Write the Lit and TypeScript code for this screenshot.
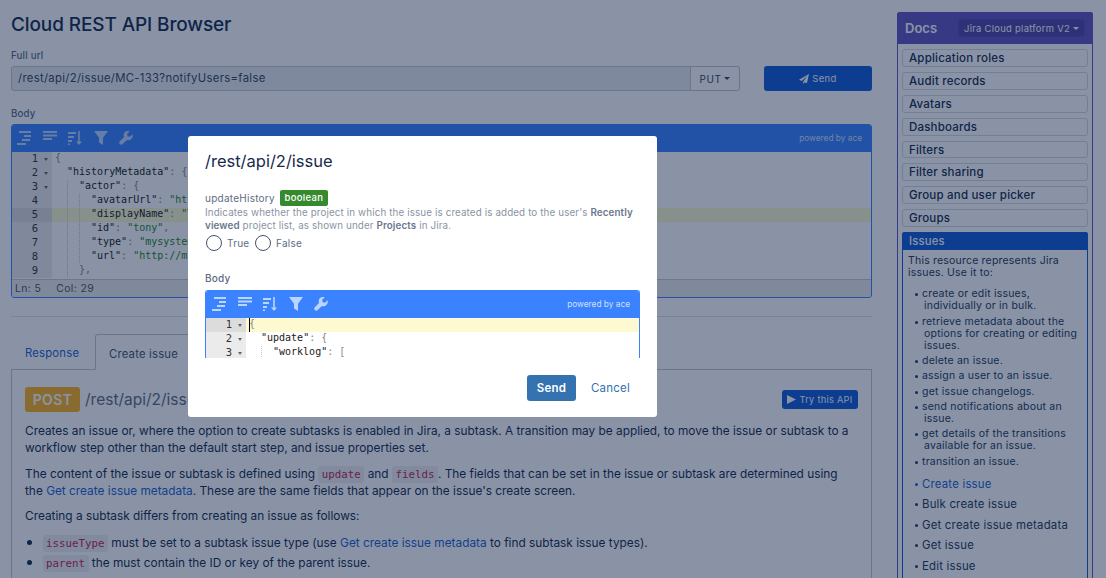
import { LitElement, html, css, svg } from "lit";
import { customElement } from "lit/decorators.js";

const icons = [
  svg`<path d="M2 0h12v2H2zM7 4h7v2H7zM5 8h8v2H5zM0 12h9v2H0z"/>`,
  svg`<path d="M0 0h14v2H0zM0 3.5h14v2H0zM0 7h9v2H0z"/>`,
  svg`<path d="M0 1h8v2H0zM0 5h6v2H0zM0 9h4v2H0zM0 12.5h2v1.5H0zM10.2 0h1.6v10.5H14L11 14 8 10.5h2.2z"/>`,
  svg`<path d="M0 0h14L9 6.8V14L5 11.5V6.8z"/>`,
  svg`<path d="M13.5 3.2L11 5.7 8.6 5.2 8.1 2.8 10.6.4C8.8-.3 6.8.2 5.6 1.6 4.6 2.9 4.4 4.6 5 6L.8 10.2C0 11 0 12.3.8 13.1 1.6 13.9 2.9 13.9 3.7 13.1L7.9 8.9C9.4 9.5 11.1 9.2 12.3 8 13.6 6.8 14.1 4.9 13.5 3.2Z"/>`,
];

type Seg = [string, string];
const k = (s: string): Seg => ["k", s];
const v = (s: string): Seg => ["v", s];
const p = (s: string): Seg => ["p", s];

const bgLines: { n: number; fold: boolean; ind: number; segs: Seg[]; active?: boolean }[] = [
  { n: 1, fold: true, ind: 0, segs: [p("{")] },
  { n: 2, fold: true, ind: 1, segs: [k('"historyMetadata"'), p(": {")] },
  { n: 3, fold: true, ind: 2, segs: [k('"actor"'), p(": {")] },
  { n: 4, fold: false, ind: 3, segs: [k('"avatarUrl"'), p(": "), v('"http://mysystem/avatar/tony.jpg"'), p(",")] },
  { n: 5, fold: false, ind: 3, segs: [k('"displayName"'), p(": "), v('"Tony"'), p(",")], active: true },
  { n: 6, fold: false, ind: 3, segs: [k('"id"'), p(": "), v('"tony"'), p(",")] },
  { n: 7, fold: false, ind: 3, segs: [k('"type"'), p(": "), v('"mysystem-user"'), p(",")] },
  { n: 8, fold: false, ind: 3, segs: [k('"url"'), p(": "), v('"http://mysystem/users/tony"')] },
  { n: 9, fold: false, ind: 2, segs: [p("},")] },
];
const modalLines: typeof bgLines = [
  { n: 1, fold: true, ind: 0, segs: [p("{")], active: true },
  { n: 2, fold: true, ind: 1, segs: [k('"update"'), p(": {")] },
  { n: 3, fold: true, ind: 2, segs: [k('"worklog"'), p(": [")] },
];

const navItems = ["Application roles", "Audit records", "Avatars", "Dashboards", "Filters", "Filter sharing", "Group and user picker", "Groups"];
const useItems = [
  "create or edit issues, individually or in bulk.",
  "retrieve metadata about the options for creating or editing issues.",
  "delete an issue.",
  "assign a user to an issue.",
  "get issue changelogs.",
  "send notifications about an issue.",
  "get details of the transitions available for an issue.",
  "transition an issue.",
];
const opLinks = ["Create issue", "Bulk create issue", "Get create issue metadata", "Get issue", "Edit issue"];

@customElement("app-root")
export class AppRoot extends LitElement {
  static styles = css`
    :host { display: block; font-family: Inter, "Liberation Sans", sans-serif; color: #172b4d; }
    * { box-sizing: border-box; }
    .page { position: relative; display: flex; height: 578px; width: 1106px; overflow: hidden; background: #fff; }
    .main { width: 861px; margin-left: 11px; flex: none; }
    h1 { margin: 13px 0 0; font-size: 19px; line-height: 24px; font-weight: 500; letter-spacing: -0.12px; }
    .lbl { font-size: 9.7px; line-height: 12px; font-weight: 500; color: #5e6c84; letter-spacing: 0.2px; }
    .lbl.url { margin-top: 13px; }
    .lbl.body { margin-top: 17px; }
    .urlrow { display: flex; margin-top: 4px; height: 25px; }
    .inp { width: 680px; background: #ebecf0; border: 1px solid #c1c7d0; border-radius: 3px 0 0 3px; font-size: 11.3px; line-height: 23px; padding-left: 6px; color: #344563; letter-spacing: 0.32px; }
    .put { width: 49px; border: 1px solid #c1c7d0; border-left: 0; border-radius: 0 3px 3px 0; font-size: 10px; display: flex; align-items: center; justify-content: center; gap: 3px; color: #344563; letter-spacing: 0.5px; }
    .caret { width: 0; height: 0; border-left: 3px solid transparent; border-right: 3px solid transparent; border-top: 3px solid currentColor; }
    .send-top { width: 108px; margin-left: 24px; background: #115ad6; border-radius: 3px; color: #fff; font-size: 9.5px; display: flex; align-items: center; justify-content: center; gap: 3px; letter-spacing: 0.4px; }
    .send-top svg { width: 10px; height: 10px; fill: currentColor; }

    .ed { margin-top: 4px; border: 1px solid #3b82ff; border-radius: 3px; overflow: hidden; display: flex; flex-direction: column; background: #fff; }
    .ed.bg { height: 174px; }
    .ed.md { height: 68px; border-bottom: 0; border-radius: 3px 3px 0 0; margin-top: 6px; }
    .ebar { flex: none; background: #3b82ff; display: flex; align-items: center; padding-left: 6px; gap: 11.6px; margin-top: -1px; height: 28px; }
    .ed.bg .ebar { padding-left: 5px; }
    .ebar svg { width: 14px; height: 14px; fill: #bcd5ff; flex: none; }
    .ebar span { margin-left: auto; font-size: 8.3px; color: #cfe0ff; padding-right: 9px; }
    .ebody { flex: 1; min-height: 0; overflow: hidden; font-family: "DejaVu Sans Mono", monospace; font-size: 10px; line-height: 12px; }
    .ln { display: flex; height: 14px; white-space: pre; }
    .gut { width: 40px; flex: none; background: #ebebeb; color: #333; text-align: right; padding-right: 14px; position: relative; font-size: 10.5px; }
    .gut.f::after { content: ""; position: absolute; right: 4px; top: 6px; border-left: 2.5px solid transparent; border-right: 2.5px solid transparent; border-top: 3px solid #666; }
    .ln.act .gut { background: #dcdcdc; }
    .code { flex: 1; padding-left: 3px; position: relative; }
    .ln.act .code { background: #fdf9d0; }
    .gd { display: inline-block; width: 12px; height: 14px; vertical-align: top; }
    .gd.on { background: linear-gradient(#ccc 50%, transparent 50%) 0 0 / 1px 2px repeat-y; }
    .k { color: #1a1a1a; } .v { color: #1a8a1a; } .p { color: #888; }
    .cursor { position: absolute; left: 3px; top: 0; width: 1px; height: 14px; background: #000; }
    .status { height: 18px; flex: none; background: #ebebeb; border-top: 1px solid #c9c9c9; font-size: 10.4px; line-height: 18px; color: #555; padding-left: 3px; display: flex; gap: 15px; letter-spacing: 0.4px; }

    hr { margin: 18px 0 0; border: 0; border-top: 1px solid #dfe1e6; }
    .tabs { display: flex; margin-top: 17px; height: 36px; margin-bottom: -1px; position: relative; }
    .tab { font-size: 11.3px; line-height: 39px; letter-spacing: 0.2px; }
    .tab.r { color: #1c5fd0; padding: 0 16px 0 14px; width: 84px; }
    .tab.c { width: 95px; height: 36px; line-height: 38px; border: 1px solid #c1c7d0; border-bottom: 1px solid #fff; border-radius: 3px 3px 0 0; color: #42526e; padding-left: 13px; background: #fff; position: relative; }
    .panel { border: 1px solid #c1c7d0; height: 300px; padding: 17px 16px 17px 13px; font-size: 11.85px; line-height: 17px; }
    .phead { display: flex; align-items: center; height: 25px; margin-right: -3px; }
    .post { width: 55px; height: 25px; background: #ffb320; color: #fff; border-radius: 3px; font-size: 14px; font-weight: 600; display: flex; align-items: center; justify-content: center; letter-spacing: 0.4px; }
    .path { margin-left: 5px; font-size: 15.5px; color: #5e6c84; }
    .try { margin-left: auto; width: 76px; height: 19px; background: #115ad6; color: #fff; border-radius: 3px; font-size: 9.2px; display: flex; align-items: center; justify-content: center; gap: 3px; letter-spacing: 0.3px; }
    .try svg { width: 9px; height: 9px; fill: currentColor; }
    .panel p { margin: 0 0 8.5px; }
    .panel p.first { margin-top: 11px; }
    a { color: #1c5fd0; text-decoration: none; }
    code { font-family: "DejaVu Sans Mono", monospace; font-size: 10.8px; color: #c7254e; background: #f0edf2; border-radius: 3px; padding: 2px 3.5px; }
    .panel ul { margin: -1px 0 0; padding: 0 0 0 17.5px; list-style: none; }
    .panel li { height: 20px; line-height: 20px; position: relative; }
    .panel li::before { content: ""; position: absolute; left: -16px; top: 7px; width: 5px; height: 5px; border-radius: 50%; background: #172b4d; }

    .side { width: 196px; margin-left: 25px; margin-top: 12px; flex: none; border: 1px solid #6554c0; border-bottom: 0; border-radius: 3px 3px 0 0; height: 566px; }
    .shead { height: 32px; margin: -1px -1px 0; background: #6554c0; border-radius: 3px 3px 0 0; display: flex; align-items: center; padding: 0 8px 0 8px; justify-content: space-between; }
    .shead b { color: #fff; font-size: 13px; font-weight: 600; }
    .dd { width: 127px; height: 18px; background: #5243aa; border-radius: 3px; color: #fff; font-size: 9.4px; display: flex; align-items: center; justify-content: center; gap: 3px; letter-spacing: 0.3px; border: 1px solid #5a4bb8; }
    .nav { padding: 5px 4px 0 4px; display: flex; flex-direction: column; gap: 5px; }
    .it { height: 17.9px; border: 1px solid #d5d8de; border-radius: 3px; font-size: 11.5px; font-weight: 500; line-height: 16px; padding-left: 6px; color: #172b4d; letter-spacing: 0.2px; }
    .iss { border: 1px solid #115ad6; border-bottom: 0; border-radius: 3px 3px 0 0; height: 400px; font-size: 10.5px; line-height: 12px; }
    .ih { height: 18px; margin: -1px -1px 0; background: #115ad6; color: #fff; font-size: 11.2px; font-weight: 500; line-height: 18px; padding-left: 7px; border-radius: 3px 3px 0 0; letter-spacing: 0.2px; }
    .idesc { padding: 5px 5px 0; color: #253858; letter-spacing: 0.2px; }
    .iss ul { margin: 0; padding: 0; list-style: none; }
    .iss ul.use { margin-top: 9px; }
    .use li { position: relative; padding-left: 21px; text-indent: -2px; margin-bottom: 3.4px; letter-spacing: 0.2px; color: #253858; padding-right: 3px; }
    .use li::before, .ops li::before { content: ""; position: absolute; left: 12px; top: 5px; width: 3px; height: 3px; border-radius: 50%; background: currentColor; }
    .iss ul.ops { margin-top: 6px; }
    .ops li { position: relative; padding-left: 19px; height: 20.5px; line-height: 20px; font-size: 11.4px; color: #253858; letter-spacing: 0.2px; }
    .ops li::before { top: 9px; }
    .ops li.cur { color: #1c5fd0; }

    .overlay { position: absolute; inset: 0; background: rgba(9, 30, 66, 0.48); display: flex; align-items: flex-start; justify-content: flex-start; padding: 136px 0 0 188px; }
    .modal { width: 469px; height: 281px; background: #fff; border-radius: 3px; display: flex; flex-direction: column; }
    .mt { font-size: 16.5px; line-height: 20px; font-weight: 400; padding: 15px 17px 0; color: #172b4d; }
    .mb { flex: 1; min-height: 0; overflow: hidden; padding: 19px 17px 0; }
    .frow { display: flex; align-items: center; height: 16px; gap: 5px; font-size: 10px; color: #5e6c84; letter-spacing: 0.25px; }
    .badge { width: 48px; height: 16px; background: #348a2c; color: #fff; border-radius: 2px; font-size: 9.5px; font-weight: 500; text-align: center; line-height: 16px; letter-spacing: 0.3px; }
    .fdesc { font-size: 9.8px; line-height: 13px; color: #8993a4; margin-top: 0; letter-spacing: 0.13px; }
    .fdesc b { color: #6b778c; font-weight: 600; }
    .radios { display: flex; align-items: center; height: 17px; margin-top: 2px; padding-left: 1px; font-size: 10px; color: #5e6c84; letter-spacing: 0.25px; }
    .rd { width: 16px; height: 16px; border: 1px solid #42526e; border-radius: 50%; margin-right: 5px; }
    .radios span { margin-right: 5px; width: 23px; }
    .bl { margin-top: 21px; font-size: 10px; line-height: 12px; color: #5e6c84; font-weight: 500; letter-spacing: 0.2px; }
    .mf { height: 59px; flex: none; display: flex; align-items: flex-start; padding: 17px 0 0 339px; }
    .ok { width: 49px; height: 26px; background: #3572b0; color: #fff; border-radius: 3px; font-size: 11.5px; font-weight: 600; text-align: center; line-height: 26px; letter-spacing: 0.2px; }
    .no { margin-left: 15px; font-size: 11.5px; line-height: 26px; color: #3572b0; letter-spacing: 0.2px; }
  `;

  private bar() {
    return html`<div class="ebar">${icons.map((i) => html`<svg viewBox="0 0 14 14">${i}</svg>`)}<span>powered by ace</span></div>`;
  }

  private lines(ls: typeof bgLines, cursor = false) {
    return ls.map(
      (l) => html`<div class="ln ${l.active ? "act" : ""}">
        <div class="gut ${l.fold ? "f" : ""}">${l.n}</div>
        <div class="code">${cursor && l.active ? html`<i class="cursor"></i>` : ""}${Array.from({ length: l.ind }, (_, i) => html`<span class="gd ${i > 0 ? "on" : ""}"></span>`)}${l.segs.map((s) => html`<span class=${s[0]}>${s[1]}</span>`)}</div>
      </div>`
    );
  }

  render() {
    return html`<div class="page">
      <div class="main">
        <h1>Cloud REST API Browser</h1>
        <div class="lbl url">Full url</div>
        <div class="urlrow">
          <div class="inp">/rest/api/2/issue/MC-133?notifyUsers=false</div>
          <div class="put">PUT <i class="caret"></i></div>
          <div class="send-top"><svg viewBox="0 0 12 12"><path d="M12 0L0 7l3.4 1.5L10 2 5 9.2V12l2-2.2L9.5 11z"/></svg>Send</div>
        </div>
        <div class="lbl body">Body</div>
        <div class="ed bg">
          ${this.bar()}
          <div class="ebody">${this.lines(bgLines)}</div>
          <div class="status"><span>Ln: 5</span><span>Col: 29</span></div>
        </div>
        <hr />
        <div class="tabs"><div class="tab r">Response</div><div class="tab c">Create issue</div></div>
        <div class="panel">
          <div class="phead">
            <div class="post">POST</div><div class="path">/rest/api/2/issue</div>
            <div class="try"><svg viewBox="0 0 9 9"><path d="M0 0l9 4.5L0 9z"/></svg>Try this API</div>
          </div>
          <p class="first">Creates an issue or, where the option to create subtasks is enabled in Jira, a subtask. A transition may be applied, to move the issue or subtask to a workflow step other than the default start step, and issue properties set.</p>
          <p>The content of the issue or subtask is defined using <code>update</code> and <code>fields</code>. The fields that can be set in the issue or subtask are determined using the <a>Get create issue metadata</a>. These are the same fields that appear on the issue's create screen.</p>
          <p>Creating a subtask differs from creating an issue as follows:</p>
          <ul>
            <li><code>issueType</code> must be set to a subtask issue type (use <a>Get create issue metadata</a> to find subtask issue types).</li>
            <li><code>parent</code> the must contain the ID or key of the parent issue.</li>
          </ul>
        </div>
      </div>
      <div class="side">
        <div class="shead"><b>Docs</b><div class="dd">Jira Cloud platform V2 <i class="caret"></i></div></div>
        <div class="nav">
          ${navItems.map((n) => html`<div class="it">${n}</div>`)}
          <div class="iss">
            <div class="ih">Issues</div>
            <div class="idesc">This resource represents Jira issues. Use it to:</div>
            <ul class="use">${useItems.map((u) => html`<li>${u}</li>`)}</ul>
            <ul class="ops">${opLinks.map((o, i) => html`<li class=${i === 0 ? "cur" : ""}>${o}</li>`)}</ul>
          </div>
        </div>
      </div>
      <div class="overlay">
        <div class="modal">
          <div class="mt">/rest/api/2/issue</div>
          <div class="mb">
            <div class="frow"><span>updateHistory</span><span class="badge">boolean</span></div>
            <div class="fdesc">Indicates whether the project in which the issue is created is added to the user's <b>Recently viewed</b> project list, as shown under <b>Projects</b> in Jira.</div>
            <div class="radios"><i class="rd"></i><span>True</span><i class="rd"></i><span>False</span></div>
            <div class="bl">Body</div>
            <div class="ed md">${this.bar()}<div class="ebody">${this.lines(modalLines, true)}</div></div>
          </div>
          <div class="mf"><div class="ok">Send</div><div class="no">Cancel</div></div>
        </div>
      </div>
    </div>`;
  }
}
